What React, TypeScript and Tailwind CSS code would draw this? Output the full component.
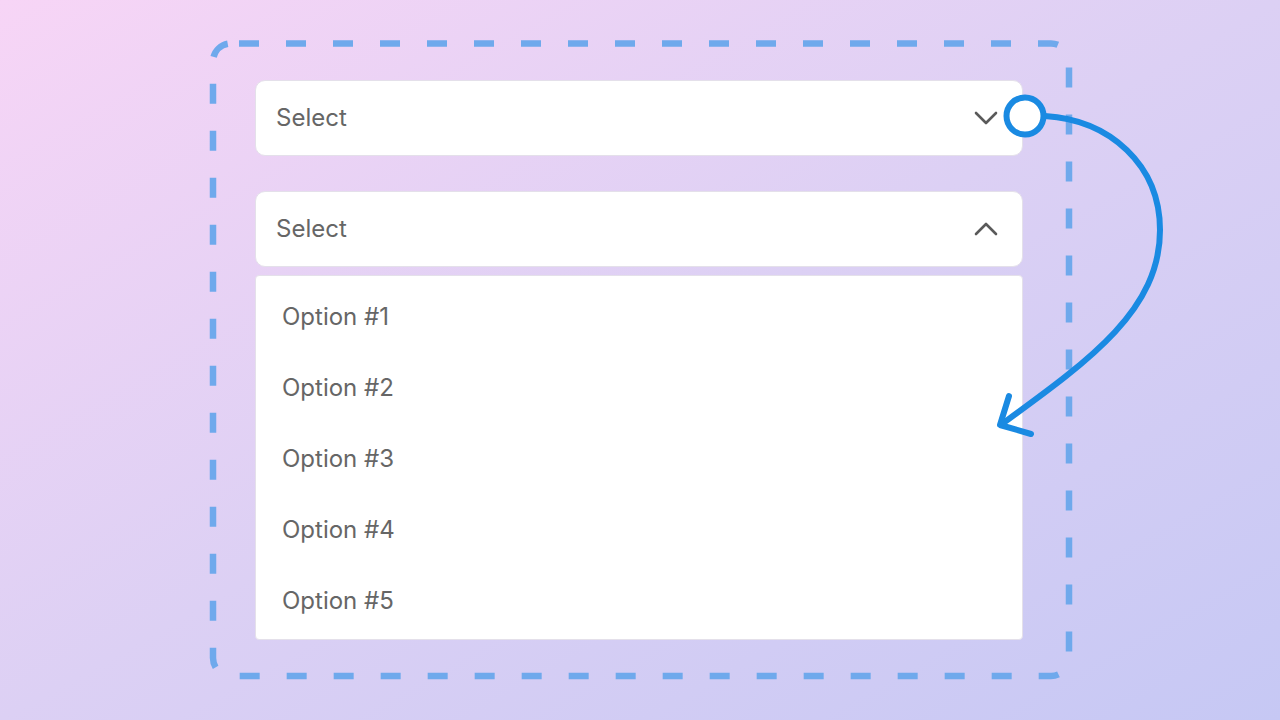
import React from "react";

const Chevron = ({ up }: { up?: boolean }) => (
  <svg width="24" height="14" viewBox="0 0 24 14" className="shrink-0">
    <path
      d={up ? "M2 12 L12 2 L22 12" : "M2 2 L12 12 L22 2"}
      fill="none"
      stroke="#5a5a5a"
      strokeWidth="2.6"
      strokeLinecap="round"
      strokeLinejoin="round"
    />
  </svg>
);

export default function App() {
  const options = ["Option #1", "Option #2", "Option #3", "Option #4", "Option #5"];
  return (
    <div
      className="relative w-[1280px] h-[720px] overflow-hidden flex items-center justify-center bg-gradient-to-br from-[#f7d5f6] via-[#dcd0f4] to-[#c6c8f4]"
      style={{ fontFamily: "Inter, 'Noto Sans', sans-serif" }}
    >
      <div className="relative w-[862px] h-[640px] pl-[46px] pr-[48px] pt-[40px] flex flex-col">
        <div className="h-[76px] bg-white rounded-[10px] border border-[#e4e0ea] flex items-center justify-between pl-[20px] pr-[24px]">
          <span className="text-[24px] text-[#666666]">Select</span>
          <Chevron />
        </div>
        <div className="mt-[35px] h-[76px] bg-white rounded-[10px] border border-[#e4e0ea] flex items-center justify-between pl-[20px] pr-[24px]">
          <span className="text-[24px] text-[#666666]">Select</span>
          <Chevron up />
        </div>
        <div className="mt-[8px] h-[365px] bg-white rounded-[4px] border border-[#e4e0ea] pt-[5px] flex flex-col">
          {options.map((o) => (
            <div key={o} className="h-[71px] flex items-center pl-[26px] text-[24px] text-[#666666]">
              {o}
            </div>
          ))}
        </div>
      </div>
      <svg
        className="absolute inset-0 pointer-events-none"
        width="1280"
        height="720"
        viewBox="0 0 1280 720"
      >
        <rect
          x="213"
          y="43.5"
          width="856"
          height="632.5"
          rx="18"
          fill="none"
          stroke="#6fa9ec"
          strokeWidth="6.5"
          strokeDasharray="20 27"
          strokeDashoffset="-8"
        />
        <path
          d="M1045 116 C1110 120 1160 165 1160 230 C1160 310 1090 360 1002 424"
          fill="none"
          stroke="#1a8ae2"
          strokeWidth="6"
          strokeLinecap="round"
        />
        <path
          d="M1009 396 L1000 425 L1031 434"
          fill="none"
          stroke="#1a8ae2"
          strokeWidth="6"
          strokeLinecap="round"
          strokeLinejoin="round"
        />
        <circle cx="1025" cy="116" r="18.5" fill="white" stroke="#1a8ae2" strokeWidth="6" />
      </svg>
    </div>
  );
}
